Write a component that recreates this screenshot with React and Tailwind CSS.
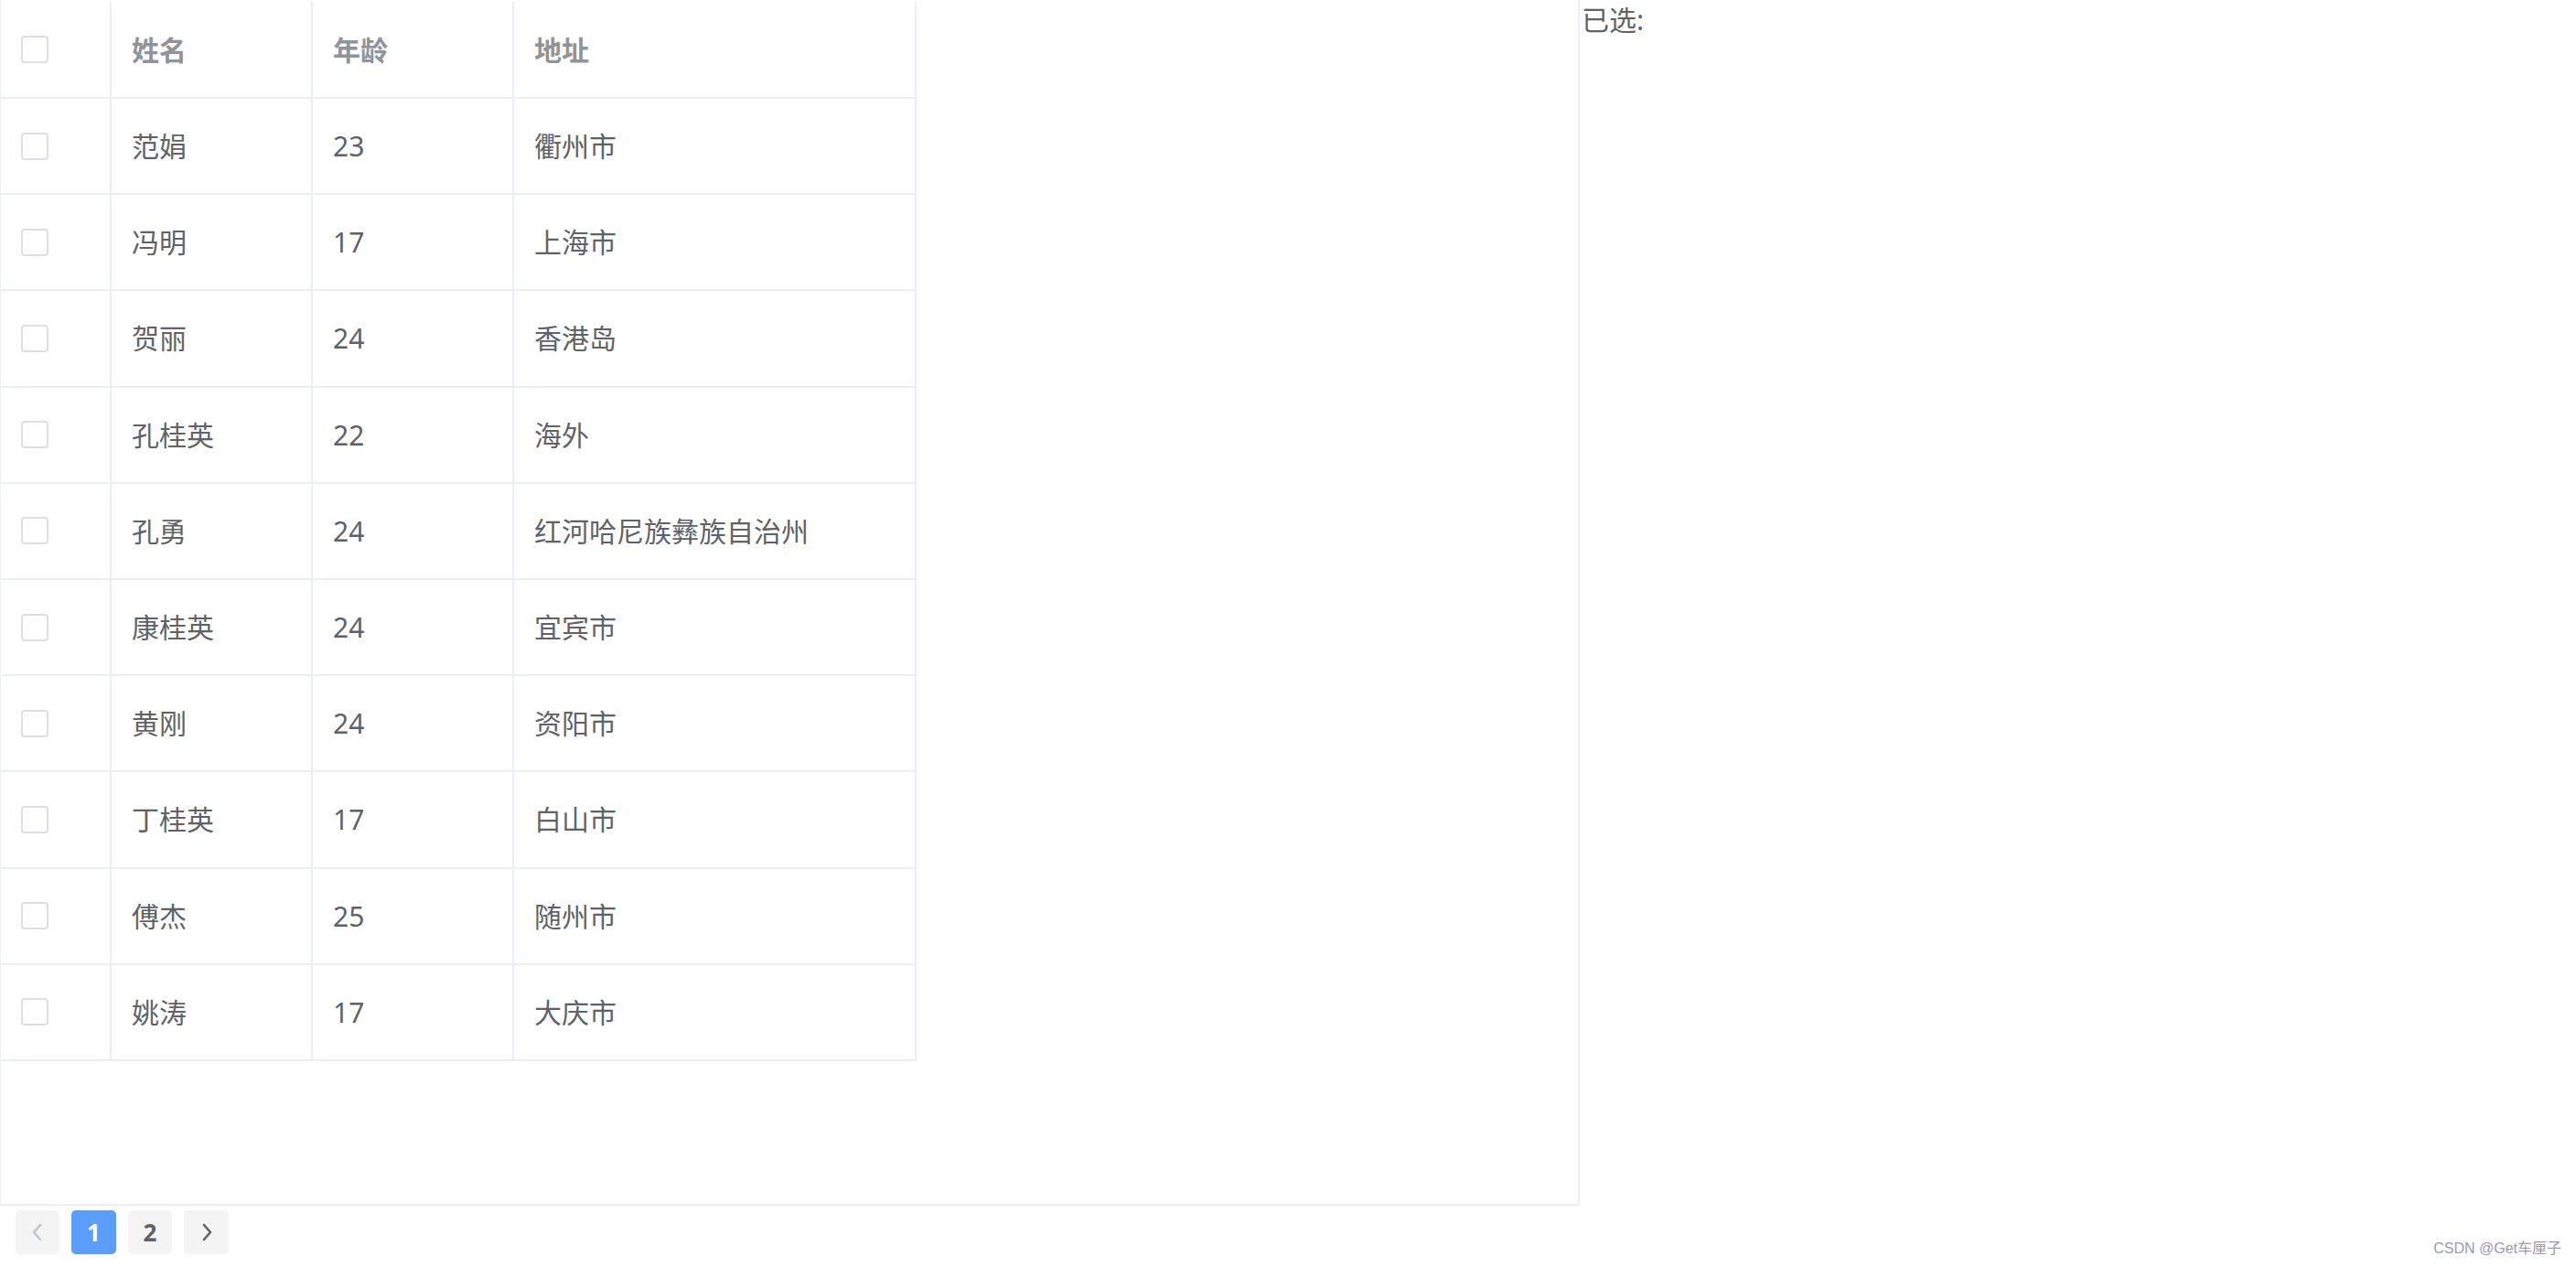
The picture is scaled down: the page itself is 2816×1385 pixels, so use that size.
import React from 'react'

const rows = [
  { name: '范娟', age: 23, address: '衢州市' },
  { name: '冯明', age: 17, address: '上海市' },
  { name: '贺丽', age: 24, address: '香港岛' },
  { name: '孔桂英', age: 22, address: '海外' },
  { name: '孔勇', age: 24, address: '红河哈尼族彝族自治州' },
  { name: '康桂英', age: 24, address: '宜宾市' },
  { name: '黄刚', age: 24, address: '资阳市' },
  { name: '丁桂英', age: 17, address: '白山市' },
  { name: '傅杰', age: 25, address: '随州市' },
  { name: '姚涛', age: 17, address: '大庆市' },
]

const font = { fontFamily: '"Noto Sans", "Noto Sans CJK SC", sans-serif' }

function Checkbox() {
  return <span className="block w-[30px] h-[30px] rounded-[4px] border-2 border-[#dcdfe6] bg-white" />
}

function Row({ cells, header }) {
  return (
    <div className={`flex border-b-2 border-[#ebeef5] ${header ? 'h-[108px] pt-[2px]' : 'h-[105.2px]'}`}>
      <div className="w-[121px] flex items-center pl-[22px] border-r-2 border-[#ebeef5]">
        <Checkbox />
      </div>
      <div className="w-[220px] flex items-center pl-[22px] border-r-2 border-[#ebeef5]">{cells[0]}</div>
      <div className="w-[220px] flex items-center pl-[22px] border-r-2 border-[#ebeef5]">{cells[1]}</div>
      <div className="w-[440px] flex items-center pl-[22px] border-r-2 border-[#ebeef5]">{cells[2]}</div>
    </div>
  )
}

function Chevron({ dir, color }) {
  return (
    <svg width="16" height="24" viewBox="0 0 16 24" fill="none" stroke={color} strokeWidth="2.6" strokeLinecap="round" strokeLinejoin="round">
      {dir === 'left' ? <path d="M11 4 L4 12 L11 20" /> : <path d="M5 4 L12 12 L5 20" />}
    </svg>
  )
}

export default function App() {
  return (
    <div className="relative w-[2816px] h-[1385px] bg-white" style={font}>
      <div className="flex items-start">
        <div className="w-[1727px] h-[1318px] border-l border-r-2 border-b-2 border-[#ebeef5]">
          <div className="w-[1001px] text-[30px] text-[#606266]">
            <Row header cells={[
              <span className="font-bold text-[#909399]">姓名</span>,
              <span className="font-bold text-[#909399]">年龄</span>,
              <span className="font-bold text-[#909399]">地址</span>,
            ]} />
            {rows.map((r) => (
              <Row key={r.name} cells={[r.name, r.age, r.address]} />
            ))}
          </div>
        </div>
        <div className="pl-[2px] text-[30px] leading-[44px] text-[#606266]">已选:</div>
      </div>

      {/* pagination */}
      <div className="flex gap-[13px] pl-[17px] mt-[5px] text-[26px] font-bold">
        <div className="w-[48px] h-[48px] rounded-[5px] bg-[#f4f4f5] flex items-center justify-center">
          <Chevron dir="left" color="#c0c4cc" />
        </div>
        <div className="w-[49px] h-[48px] rounded-[5px] bg-[#5a9ef9] text-white flex items-center justify-center">1</div>
        <div className="w-[48px] h-[48px] rounded-[5px] bg-[#f4f4f5] text-[#606266] flex items-center justify-center">2</div>
        <div className="w-[49px] h-[48px] rounded-[5px] bg-[#f4f4f5] flex items-center justify-center">
          <Chevron dir="right" color="#606266" />
        </div>
      </div>

      <div className="absolute right-[16px] bottom-[8px] text-[16px] text-[#999aaa]" style={{ fontFamily: '"Liberation Sans", "Noto Sans CJK SC", sans-serif' }}>
        CSDN @Get车厘子
      </div>
    </div>
  )
}
